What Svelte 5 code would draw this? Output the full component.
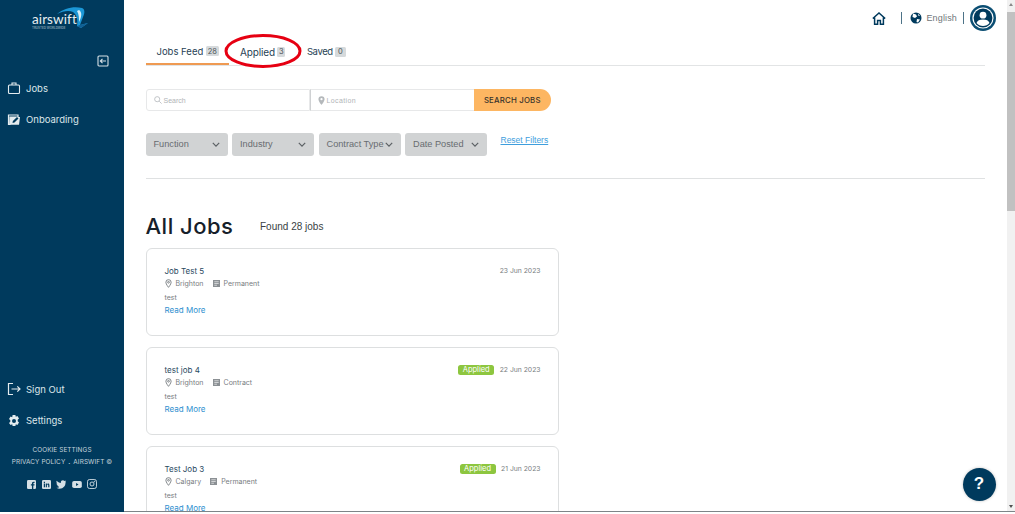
<script>
  const jobs = [
    { title: 'Job Test 5', place: 'Brighton', type: 'Permanent', date: '23 Jun 2023', applied: false },
    { title: 'test job 4', place: 'Brighton', type: 'Contract', date: '22 Jun 2023', applied: true },
    { title: 'Test Job 3', place: 'Calgary', type: 'Permanent', date: '21 Jun 2023', applied: true }
  ];
  const filters = ['Function', 'Industry', 'Contract Type', 'Date Posted'];
</script>

<div class="page">
  <div class="window">
    <aside class="sidebar">
      <div class="logo">
        <span class="wordmark">airswift</span>
        <span class="tagline">TRUSTED WORLDWIDE</span>
        <svg class="bird" viewBox="0 0 34 26" width="34" height="26">
          <path d="M1 9C8 3 18 1 26 3c3 1 3 5 1 9l-3 8 8-2-7 5-4-2c1-6 0-11-4-14C13 5 7 6 1 9z" fill="#1b97d6"/>
          <path d="M23 5c3 2 3 6 0 12 0-4 0-8-2-11z" fill="#d4eef8"/>
          <path d="M24 20l8-2-7 5-4-2z" fill="#125f93"/>
        </svg>
      </div>
      <div class="collapse">
        <svg viewBox="0 0 12 12" width="12" height="12" fill="none" stroke="#d5e0e6" stroke-width="1.1">
          <rect x="1" y="1" width="10" height="10" rx="1"/>
          <path d="M9 6H3.500M5.500 3.800 3.300 6l2.200 2.200"/>
        </svg>
      </div>
      <nav class="nav">
        <a class="nav-item">
          <svg viewBox="0 0 14 14" width="14" height="14" fill="none" stroke="#e4ecef" stroke-width="1.100">
            <rect x="1.500" y="4" width="11" height="8.500" rx="1"/><path d="M5 4V2h4v2"/>
          </svg>
          Jobs
        </a>
        <a class="nav-item">
          <svg viewBox="0 0 14 14" width="14" height="14">
            <path d="M1.500 3h9.500v2H3v7.500H1.500z" fill="none" stroke="#e4ecef" stroke-width="1.200"/>
            <path d="M3.200 5H13l-1 7.800H2.200z" fill="#e4ecef"/>
            <path d="M5.500 11l.4-2L10 5l1.500 1.500-4 4z" fill="#003a5d"/>
          </svg>
          Onboarding
        </a>
      </nav>
      <div class="spacer"></div>
      <nav class="nav lower">
        <a class="nav-item">
          <svg viewBox="0 0 14 14" width="14" height="14" fill="none" stroke="#e4ecef" stroke-width="1.200">
            <path d="M6 1.500H1.500v11H6M4.500 7H13M10.300 4.400 13 7l-2.700 2.600"/>
          </svg>
          Sign Out
        </a>
        <a class="nav-item">
          <svg viewBox="0 0 14 14" width="14" height="14">
            <path d="M5.600 1h2.800l.4 1.700 1.600-.6 1.600 2.500-1.300 1.200v1.400l1.300 1.200-1.600 2.500-1.600-.6-.4 1.700H5.600l-.4-1.700-1.600.6L2 8.900l1.300-1.200V6.300L2 5.100l1.600-2.500 1.600.6z" fill="#e4ecef"/>
            <circle cx="7" cy="7" r="2" fill="#003a5d"/>
          </svg>
          Settings
        </a>
      </nav>
      <div class="legal">
        <div>COOKIE SETTINGS</div>
        <div class="legal-row">PRIVACY POLICY <b>.</b> AIRSWIFT ©</div>
      </div>
      <div class="social">
        <svg viewBox="0 0 10 10" width="9" height="9"><rect width="10" height="10" rx="1.500" fill="#d5e0e6"/><path d="M7 10V6.200h1.200l.2-1.400H7V4c0-.5.2-.7.700-.7h.7V2h-1C6 2 5.500 2.800 5.500 3.900v.9H4.300v1.400h1.200V10z" fill="#003a5d"/></svg>
        <svg viewBox="0 0 10 10" width="9" height="9"><rect width="10" height="10" rx="1.500" fill="#d5e0e6"/><path d="M2 4h1.300v4H2zM2 2h1.300v1.200H2zM4.200 4h1.200v.6C5.700 4.100 6.200 3.900 6.800 3.900c1 0 1.400.7 1.400 1.800V8H6.900V6c0-.6-.2-1-.7-1s-.8.400-.8 1v2H4.200z" fill="#003a5d"/></svg>
        <svg viewBox="0 0 12 10" width="10" height="9"><path d="M12 1.200c-.4.200-.9.300-1.400.4.500-.3.900-.8 1.100-1.400-.5.300-1 .5-1.600.6C9.600.3 9 0 8.300 0 6.900 0 5.800 1.100 5.800 2.500c0 .2 0 .4.100.6C3.800 3 2 2 .8.500.6.900.5 1.300.5 1.700c0 .9.400 1.600 1.100 2.100-.4 0-.8-.1-1.100-.3 0 1.200.9 2.200 2 2.500-.4.100-.8.100-1.100 0 .3 1 1.200 1.700 2.300 1.700C3.800 8.500 2.200 9 .6 8.800 1.700 9.600 3 10 4.400 10c4.500 0 7.100-3.800 7-7.200.3-.4.400-1 .6-1.600z" fill="#d5e0e6"/></svg>
        <svg viewBox="0 0 11 8" width="10" height="7"><rect width="11" height="8" rx="2" fill="#d5e0e6"/><path d="M4.400 2.300v3.400L7.300 4z" fill="#003a5d"/></svg>
        <svg viewBox="0 0 11 11" width="10" height="10" fill="none" stroke="#d5e0e6" stroke-width="1"><rect x=".5" y=".5" width="10" height="10" rx="2.500"/><circle cx="5.500" cy="5.500" r="2.200"/><circle cx="8.200" cy="2.800" r=".4"/></svg>
      </div>
    </aside>

    <main class="main">
      <header class="topbar">
        <svg class="home" viewBox="0 0 14 13" width="14" height="13" fill="none" stroke="#003a5d" stroke-width="1.500">
          <path d="M.8 6.500 7 1l6.200 5.500M2.600 5.500v6.800h3V8.500h2.800v3.800h3V5.500"/>
        </svg>
        <span class="divider first"></span>
        <svg viewBox="0 0 12 12" width="12" height="12"><circle cx="6" cy="6" r="5.500" fill="#003a5d"/><path d="M3 1.500l3 1 1 2-2 1.500-2.500-1zM7 7l3 .5-2 3-1.500-.5zM8 1.800l2 1.800-1.500.5z" fill="#fff"/></svg>
        <span class="lang">English</span>
        <span class="divider"></span>
        <svg class="avatar" viewBox="0 0 26 26" width="26" height="26">
          <circle cx="13" cy="13" r="13" fill="#0b4e73"/>
          <circle cx="13" cy="13" r="10.600" fill="#fff"/>
          <circle cx="13" cy="13" r="9.400" fill="#003a5d"/>
          <circle cx="13" cy="10.200" r="3.400" fill="#fff"/>
          <path d="M6.500 18c.8-2.600 3-3.600 6.500-3.600s5.700 1 6.500 3.600c-1.500 1.800-3.900 3-6.500 3s-5-1.200-6.500-3z" fill="#fff"/>
        </svg>
      </header>

      <div class="tabs">
        <div class="tab active">Jobs Feed <span class="count">28</span></div>
        <div class="tab applied">Applied <span class="count">3</span>
          <svg class="ring" viewBox="0 0 78 36" width="78" height="36" fill="none"><ellipse cx="39" cy="18" rx="37" ry="15.500" stroke="#e60012" stroke-width="3"/></svg>
        </div>
        <div class="tab saved">Saved <span class="count">0</span></div>
      </div>

      <div class="search">
        <div class="field first">
          <svg viewBox="0 0 10 10" width="8" height="8" fill="none" stroke="#b4b8bb" stroke-width="1"><circle cx="4" cy="4" r="3.200"/><path d="M6.500 6.500 9.500 9.500"/></svg>
          Search
        </div>
        <div class="field second">
          <svg viewBox="0 0 8 10" width="7" height="9"><path d="M4 0a3.500 3.500 0 0 0-3.500 3.500C.5 6 4 10 4 10s3.500-4 3.500-6.500A3.500 3.500 0 0 0 4 0z" fill="#b4b8bb"/><circle cx="4" cy="3.500" r="1.300" fill="#fff"/></svg>
          Location
        </div>
        <button class="search-btn">SEARCH JOBS</button>
      </div>

      <div class="filters">
        {#each filters as f}
          <div class="select">
            <span>{f}</span>
            <svg viewBox="0 0 10 6" width="8" height="5" fill="none" stroke="#5b6064" stroke-width="1.500"><path d="M1 1l4 4 4-4"/></svg>
          </div>
        {/each}
        <a class="reset">Reset Filters</a>
      </div>

      <hr class="rule" />

      <div class="heading">
        <h1>All Jobs</h1>
        <span class="found">Found 28 jobs</span>
      </div>

      <div class="cards">
        {#each jobs as job}
          <article class="card">
            <div class="card-top">
              <span class="title">{job.title}</span>
              <span class="date-wrap">
                {#if job.applied}<span class="badge">Applied</span>{/if}
                <span class="date">{job.date}</span>
              </span>
            </div>
            <div class="meta">
              <svg viewBox="0 0 8 10" width="7" height="9" fill="none" stroke="#70767a" stroke-width="1"><path d="M4 .6A3 3 0 0 0 1 3.600C1 5.800 4 9.400 4 9.400s3-3.600 3-5.800a3 3 0 0 0-3-3z"/><circle cx="4" cy="3.600" r="1"/></svg>
              <span class="place">{job.place}</span>
              <svg viewBox="0 0 8 8" width="7" height="7"><rect width="8" height="8" fill="#8b9094"/><path d="M1.500 2h5M1.500 4h5M1.500 6h3" stroke="#fff" stroke-width=".7"/></svg>
              <span>{job.type}</span>
            </div>
            <div class="desc">test</div>
            <a class="more">Read More</a>
          </article>
        {/each}
      </div>

      <button class="help">?</button>
    </main>

    <div class="scrollbar">
      <span class="arrow up"></span>
      <span class="thumb"></span>
      <span class="arrow down"></span>
    </div>
  </div>
</div>

<style>
  :global(body) { margin: 0; overflow: hidden; background: #fff; }
  .page { width: 1015px; height: 514px; overflow: hidden; font-family: Inter, "Liberation Sans", sans-serif; }
  .window { height: 512px; display: flex; }
  .sidebar { width: 124px; flex: none; background: #003a5d; color: #e4ecef; display: flex; flex-direction: column; }
  .logo { position: relative; height: 44px; margin-left: 32px; }
  .wordmark { position: absolute; top: 13px; left: 0; font-size: 13.500px; line-height: 13px; color: #e8eef1; font-family: Lato, sans-serif; letter-spacing: .1px; }
  .tagline { position: absolute; top: 26.500px; left: 0; font-size: 3px; line-height: 3px; white-space: nowrap; color: #b9ccd6; }
  .bird { position: absolute; left: 24px; top: 5px; }
  .collapse { display: flex; justify-content: flex-end; padding: 11px 15px 0 0; height: 25px; }
  .nav { display: flex; flex-direction: column; gap: 17px; margin-top: 1px; padding-left: 7px; }
  .nav-item { display: flex; align-items: center; gap: 5px; height: 14px; font-size: 9.500px; color: #dce6ea; }
  .spacer { flex: 1; }
  .nav.lower { gap: 17.500px; margin-top: 0; }
  .legal { margin-top: 16.500px; text-align: center; font-size: 6.400px; line-height: 12px; color: #c5d4dc; white-space: nowrap; letter-spacing: .1px; }
  .legal-row b { font-weight: 700; margin: 0 1px; }
  .social { display: flex; justify-content: center; align-items: center; gap: 5.500px; margin: 10px 0 22px; height: 12px; }

  .main { position: relative; flex: 1; min-width: 0; overflow: hidden; box-sizing: border-box; padding: 0 22px 0 21.500px; color: #123; border-bottom: 1px solid #7d8488; }
  .topbar { height: 36px; display: flex; align-items: center; justify-content: flex-end; color: #70767a; }
  .home { margin-right: 15px; }
  .divider { width: 1px; height: 12px; background: #4d7388; margin: 0 6px; }
  .divider.first { margin: 0 8px 0 0; }
  .lang { margin-left: 4.500px; font-family: "Liberation Sans", sans-serif; font-size: 9px; letter-spacing: .15px; }
  .avatar { margin-right: -11px; }
  .tabs { display: flex; height: 29px; border-bottom: 1px solid #e2e4e5; align-items: stretch; }
  .tab { position: relative; font-size: 9.500px; color: #1f3f55; display: flex; align-items: center; gap: 2.500px; white-space: nowrap; }
  .tab.active { width: 83px; box-sizing: border-box; padding: 3px 0 0 11px; border-bottom: 2px solid #ef9a52; }
  .tab.applied { margin-left: 11.500px; padding-top: 2px; font-size: 10px; letter-spacing: -.15px; gap: 2px; }
  .tab.saved { margin-left: 21.500px; padding-top: 2px; letter-spacing: -.4px; }
  .tab.saved .count { padding: 1.500px 2.800px; letter-spacing: 0; }
  .count { font-size: 7.500px; background: #d6dadc; color: #4d5356; padding: 1.500px 2px; border-radius: 1.500px; line-height: 7px; }
  .ring { position: absolute; left: -16px; top: -3px; }
  .search { display: flex; margin-top: 23px; height: 22px; width: 405.500px; }
  .field { box-sizing: border-box; height: 22px; display: flex; align-items: center; gap: 2px; font-size: 7px; color: #b0b4b7; background: #fff; border: 1px solid #e7e8e9; font-family: "Liberation Sans", sans-serif; }
  .field.first { width: 164px; padding-left: 7px; border-radius: 3px 0 0 3px; }
  .field.second { width: 164px; border-left: 1px solid #cfd1d3; padding-left: 7px; border-right: 0; letter-spacing: .4px; }
  .search-btn { flex: 1; border: 0; padding: 0; background: #fdb662; color: #36322c; font: 500 7.800px Inter, sans-serif; letter-spacing: .2px; border-radius: 0 11px 11px 0; }
  .filters { display: flex; gap: 4.500px; margin-top: 22px; height: 23px; align-items: flex-start; }
  .select { box-sizing: border-box; width: 82px; height: 23px; padding: 0 8px 1px; background: #d1d3d4; border-radius: 3px; display: flex; align-items: center; justify-content: space-between; font: 9.200px "Liberation Sans", sans-serif; color: #686c70; white-space: nowrap; }
  .reset { margin: 2px 0 0 9px; font: 8.500px/11px "Liberation Sans", sans-serif; color: #3e9edd; text-decoration: underline; }
  .rule { border: 0; border-top: 1px solid #dfe1e2; margin: 22px 0 0; }
  .heading { display: flex; align-items: center; margin-top: 29px; height: 36px; }
  h1 { margin: 0; width: 114.500px; font-size: 22px; font-weight: 500; color: #16202a; letter-spacing: .5px; }
  .found { color: #3a3f44; font-family: "Liberation Sans", sans-serif; font-size: 10px; }
  .cards { width: 413px; margin-top: 4px; display: flex; flex-direction: column; gap: 11px; }
  .card { box-sizing: border-box; height: 88px; flex: none; padding: 16px 17px 0 18px; border: 1px solid #dddfe0; border-radius: 6px; background: #fff; }
  .card-top { display: flex; justify-content: space-between; align-items: center; height: 11px; }
  .title { font-size: 8px; color: #2a4a5f; }
  .date-wrap { display: flex; align-items: center; gap: 5.500px; }
  .badge { background: #8dc63f; color: #fff; font-size: 7.500px; border-radius: 2.500px; padding: 0 4.500px; height: 10px; line-height: 10px; }
  .date { font-size: 6.800px; color: #787d81; }
  .meta { display: flex; align-items: center; gap: 4px; height: 10px; margin-top: 2px; font-size: 7px; color: #787d81; }
  .place { margin-right: 5px; }
  .desc { margin-top: 4.500px; font-size: 7px; line-height: 10px; color: #787d81; }
  .more { display: block; margin-top: 2.500px; font-size: 8px; line-height: 11px; color: #2f8fcf; }
  .help { position: absolute; right: 11.500px; bottom: 10.500px; width: 33px; height: 33px; border: 0; border-radius: 50%; padding: 0; background: #003a5d; color: #fff; font: 700 17px "Liberation Sans", sans-serif; box-shadow: 0 0 3px rgba(0,0,0,.25); }
  .scrollbar { width: 8px; flex: none; box-sizing: border-box; background: #f1f1f1; border-bottom: 1px solid #7d8488; display: flex; flex-direction: column; align-items: center; }
  .thumb { width: 8px; height: 199px; margin-top: 6px; background: #c1c1c1; }
  .arrow { width: 0; height: 0; border-left: 2.500px solid transparent; border-right: 2.500px solid transparent; }
  .arrow.up { margin-top: 3px; border-bottom: 3px solid #8a8a8a; }
  .arrow.down { margin-top: auto; margin-bottom: 3px; border-top: 3px solid #505050; }
</style>
